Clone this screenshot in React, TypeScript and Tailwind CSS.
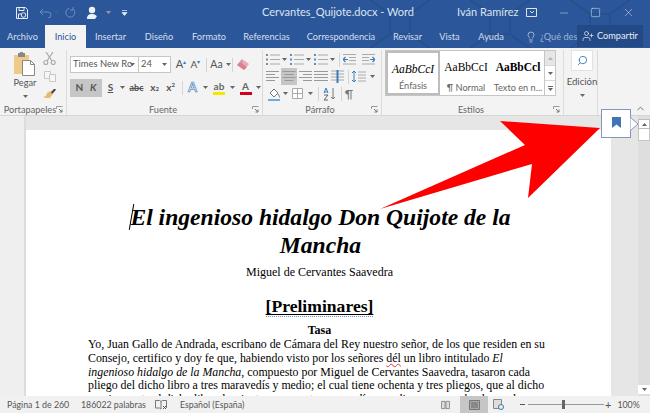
import React from "react";
import { Lightbulb, Search, UserPlus, Minus, X, Square, ChevronUp } from "lucide-react";

const ui = "font-['Lato','Roboto',sans-serif]";
const serif = "font-['Liberation_Serif','Times_New_Roman',serif]";

const tabs = [
  { label: "Archivo", w: "w-[45px]" },
  { label: "Inicio", w: "w-[41px]", active: true },
  { label: "Insertar", w: "w-[49px]" },
  { label: "Diseño", w: "w-[48px]" },
  { label: "Formato", w: "w-[52px]" },
  { label: "Referencias", w: "w-[63px]" },
  { label: "Correspondencia", w: "w-[86px]" },
  { label: "Revisar", w: "w-[47px]" },
  { label: "Vista", w: "w-[37px]" },
  { label: "Ayuda", w: "w-[46px]" },
];

function Caret({ className = "" }: { className?: string }) {
  return (
    <svg width="5" height="3" viewBox="0 0 5 3" className={className}>
      <path d="M0 0h5L2.500 3z" fill="#666" />
    </svg>
  );
}

function Launcher() {
  return (
    <svg width="7" height="7" viewBox="0 0 7 7" fill="none">
      <path d="M.5 3V.5H6.500" stroke="#999" />
      <path d="M3 3l3 3M6 3.500V6H3.500" stroke="#777" />
    </svg>
  );
}

function Cell({ w, children, className = "" }: { w: string; children?: React.ReactNode; className?: string }) {
  return <div className={`${w} h-full shrink-0 flex items-center justify-center ${className}`}>{children}</div>;
}

function Lines({ kind }: { kind: "left" | "center" | "right" | "justify" }) {
  const rows = [1, 4, 7, 10];
  const short = [13, 9, 13, 9];
  return (
    <svg width="14" height="11" viewBox="0 0 14 11">
      {rows.map((y, i) => {
        const len = kind === "justify" ? 14 : short[i];
        const x = kind === "left" || kind === "justify" ? 0 : kind === "center" ? (14 - len) / 2 : 14 - len;
        return <rect key={y} x={x} y={y - 1} width={len} height="1" fill="#999" />;
      })}
    </svg>
  );
}

function ListIcon({ colored }: { colored?: boolean }) {
  return (
    <svg width="14" height="12" viewBox="0 0 14 12">
      {[1, 5.5, 10].map((y) => (
        <g key={y}>
          <rect x="0" y={y - 1} width="2" height="2" fill={colored ? "#5b8bc0" : "#888"} />
          <rect x="4" y={y - 0.5} width="10" height="1" fill="#aaa" />
        </g>
      ))}
    </svg>
  );
}

function IndentIcon({ flip }: { flip?: boolean }) {
  return (
    <svg width="13" height="11" viewBox="0 0 13 11">
      <g transform={flip ? "translate(13 0) scale(-1 1)" : undefined}>
        <path d="M0 5.500h5M2.500 3L0 5.500 2.500 8" stroke="#3b7cb8" strokeWidth="1.2" fill="none" />
        <path d="M0 .5h13M6 3.500h7M6 6.500h7M0 10h13" stroke="#aaa" />
      </g>
    </svg>
  );
}

function PasteIcon() {
  return (
    <svg width="22" height="24" viewBox="0 0 22 24">
      <rect x="0" y="3" width="15" height="19" fill="#eec98a" />
      <rect x="4" y="1" width="7" height="4" fill="#888" />
      <rect x="6" y="0" width="3" height="2" fill="#888" />
      <path d="M8.500 8.500h8l4 4v11h-12z" fill="#fff" stroke="#888" />
      <path d="M16.500 8.500v4h4" fill="none" stroke="#888" />
    </svg>
  );
}

function ScissorsIcon() {
  return (
    <svg width="13" height="13" viewBox="0 0 13 13" fill="none" stroke="#aaa" strokeWidth="1.2">
      <path d="M3 0l6 9M10 0L4 9" />
      <circle cx="2.800" cy="10.500" r="2" />
      <circle cx="10.200" cy="10.500" r="2" />
    </svg>
  );
}

function CopyIcon() {
  return (
    <svg width="12" height="11" viewBox="0 0 12 11" fill="#f6f6f6" stroke="#c8c8c8">
      <path d="M.5.5h6v7h-6z" />
      <path d="M5.500 3.500h6v7h-6z" />
    </svg>
  );
}

function BrushIcon() {
  return (
    <svg width="13" height="11" viewBox="0 0 13 11">
      <path d="M7 3l3 3-1 1-2 3H3L0 9l3-1 1-3z" fill="#e8bb6c" />
      <path d="M8 4l3-3 2 0-1 2-3 3z" fill="#444" />
    </svg>
  );
}

function EraserIcon() {
  return (
    <svg width="14" height="14" viewBox="0 0 14 14">
      <path d="M1 7l5-6 7 5-5 6z" fill="#eba9b5" />
      <path d="M1 7l3-3 7 5-3 3z" fill="#dd7f92" />
      <path d="M5 2l1 3" stroke="#999" />
    </svg>
  );
}

function ColorA({ bar, children }: { bar: string; children: React.ReactNode }) {
  return (
    <div className="flex flex-col items-center leading-none">
      <span className="text-[10px] leading-[10px] font-bold text-[#666]">{children}</span>
      <span className={`w-[12px] h-[3px] mt-[1px] ${bar}`} />
    </div>
  );
}

function StyleItem({ sample, label, sampleClass = "", className = "" }: { sample: string; label: string; sampleClass?: string; className?: string }) {
  return (
    <div className={`flex flex-col items-center justify-between h-full shrink-0 pt-[9px] pb-[1px] bg-white ${className}`}>
      <span className={`${serif} text-[11.5px] leading-[14px] text-black whitespace-nowrap ${sampleClass}`}>{sample}</span>
      <span className="text-[9.2px] leading-[12px] text-[#666] whitespace-nowrap">{label}</span>
    </div>
  );
}

function GroupLabel({ label }: { label: string }) {
  return (
    <div className="h-[11px] mt-auto flex items-center relative text-[9.2px] text-[#666] leading-none">
      <span className="flex-1 text-center pr-[6px]">{label}</span>
      <span className="absolute right-[3px] top-[2px]">
        <Launcher />
      </span>
    </div>
  );
}

export default function App() {
  return (
    <div className={`w-[650px] h-[413px] overflow-hidden relative flex flex-col bg-[#f1f1f1] ${ui}`}>
      <div className="h-[48px] shrink-0 bg-[#2b579a] relative">
        {/* faint office pattern */}
        <svg width="300" height="48" viewBox="0 0 300 48" className="absolute left-[350px] top-0" fill="none" stroke="#26508f" strokeWidth="2">
          <path d="M20 0l20 14v20L20 48M80 0L60 14v20l20 14M60 14H40M60 34H40" />
          <path d="M120 0l20 14v20l-20 14M180 0l-20 14v20l20 14M160 14h-20M160 34h-20" />
          <path d="M220 0l20 14v20l-20 14M280 0l-20 14v20l20 14M260 14h-20M260 34h-20" />
        </svg>

        {/* title bar */}
        <div className="h-[25px] flex items-center text-[11px] text-[#dbe4f1] relative">
          <div className="flex items-center pl-[16px] w-[262px]">
            <svg width="12" height="12" viewBox="0 0 12 12" fill="none" stroke="#e6ecf5">
              <path d="M.5.5h9l2 2v9H.5z" />
              <path d="M3 .5v3h5v-3" />
              <circle cx="7.500" cy="8" r="2.300" fill="#2b579a" />
              <path d="M2.500 11V7h3" />
            </svg>
            <svg width="13" height="10" viewBox="0 0 13 10" fill="none" stroke="#6f8cba" className="ml-[11px]">
              <path d="M1 4h8a3 3 0 010 6M1 4l3-3M1 4l3 3" />
            </svg>
            <Caret className="ml-[2px] opacity-40" />
            <svg width="11" height="11" viewBox="0 0 11 11" fill="none" stroke="#6f8cba" className="ml-[6px]">
              <path d="M8 2a4.500 4.500 0 11-4-.7M8 0v3H5" />
            </svg>
            <svg width="11" height="14" viewBox="0 0 11 14" className="ml-[11px]">
              <circle cx="5" cy="4" r="3.200" fill="#eef2f8" />
              <path d="M0 13c0-4 2-5 5-5s3 1 5 2l-2 3z" fill="#eef2f8" />
            </svg>
            <Caret className="ml-[8px] invert" />
            <svg width="7" height="6" viewBox="0 0 7 6" className="ml-[10px]">
              <path d="M1 .5h5M1 2.500h5L3.500 5.500z" stroke="#e6ecf5" fill="#e6ecf5" strokeWidth=".7" />
            </svg>
          </div>
          <span className="w-[195px] whitespace-nowrap">Cervantes_Quijote.docx - Word</span>
          <span className="w-[68px] whitespace-nowrap">Iván Ramírez</span>
          <svg width="11" height="9" viewBox="0 0 11 9" fill="none" stroke="#dbe4f1" className="ml-[1px]">
            <path d="M.5.5h10v8H.5z" />
            <path d="M4 3l2 2 2-2" />
          </svg>
          <Minus size={12} strokeWidth={1} className="ml-[21px] text-[#dbe4f1]" />
          <Square size={11} strokeWidth={1.2} className="ml-[20px] text-[#dbe4f1]" />
          <X size={13} strokeWidth={1} className="ml-[21px] text-[#dbe4f1]" />
        </div>

        {/* tabs */}
        <div className="h-[23px] flex items-stretch text-[9.2px] text-[#d5dfee] leading-none relative">
          {tabs.map((t) => (
            <div
              key={t.label}
              className={`${t.w} shrink-0 flex items-center justify-center whitespace-nowrap ${t.active ? "bg-[#f3f3f3] text-[#2b579a]" : ""}`}
            >
              {t.label}
            </div>
          ))}
          <div className="flex items-center ml-[11px] w-[50px] text-[#9fb4d3]">
            <Lightbulb size={12} strokeWidth={1.3} className="text-[#dbe4f1] mr-[3px] shrink-0" />
            <span className="whitespace-nowrap">¿Qué des</span>
          </div>
          <div className="w-[66px] ml-[2px] mb-[1px] bg-[#234a86] flex items-center justify-center text-[#e6ecf5] whitespace-nowrap">
            <UserPlus size={12} strokeWidth={1.4} className="mr-[3px]" />
            Compartir
          </div>
        </div>
      </div>

      {/* ribbon */}
      <div className="h-[68px] shrink-0 bg-[#f3f3f3] border-b border-[#d6d6d6] flex text-[#555]">
        {/* Portapapeles */}
        <div className="w-[67px] shrink-0 flex flex-col border-r border-[#dcdcdc] mt-[2px]">
          <div className="flex pt-[2px]">
            <div className="w-[41px] flex flex-col items-center pl-[9px]">
              <PasteIcon />
              <span className="text-[9.2px] leading-[12px] mt-[1px]">Pegar</span>
              <Caret className="mt-[6px]" />
            </div>
            <div className="flex flex-col items-center gap-[6px] pl-[2px]">
              <ScissorsIcon />
              <CopyIcon />
              <BrushIcon />
            </div>
          </div>
          <GroupLabel label="Portapapeles" />
        </div>

        {/* Fuente */}
        <div className="w-[196px] shrink-0 flex flex-col border-r border-[#dcdcdc] mt-[2px] pl-[3px]">
          <div className="h-[17px] mt-[6px] flex items-center">
            <div className="w-[69px] h-full bg-white border border-[#c6c6c6] flex items-center pl-[2px] text-[9.4px] whitespace-nowrap">
              <span className="w-[57px]">Times New Ro</span>
              <Caret />
            </div>
            <div className="w-[32px] h-full bg-white border border-l-0 border-[#c6c6c6] flex items-center pl-[2px] text-[9.4px]">
              <span className="w-[21px]">24</span>
              <Caret />
            </div>
            <Cell w="w-[17px]" className="text-[11px] pl-[3px]">A<sup className="text-[6px] text-[#3b7cb8]">▴</sup></Cell>
            <Cell w="w-[15px]" className="text-[10px]">A<sup className="text-[6px] text-[#3b7cb8]">▾</sup></Cell>
            <div className="w-px h-[14px] bg-[#d4d4d4] ml-[3px]" />
            <Cell w="w-[24px]" className="text-[10.5px] pl-[3px]">Aa<Caret className="ml-[3px]" /></Cell>
            <div className="w-px h-[14px] bg-[#d4d4d4] ml-[1px]" />
            <Cell w="w-[20px]"><EraserIcon /></Cell>
          </div>
          <div className="h-[17px] mt-[6px] flex items-center">
            <div className="w-[32px] h-[18px] bg-[#c6c6c6] flex items-center justify-around text-[10px] font-bold px-[2px]">
              <span>N</span>
              <span className="italic">K</span>
            </div>
            <Cell w="w-[17px]" className="text-[10px] font-bold underline">S</Cell>
            <Cell w="w-[7px]"><Caret /></Cell>
            <Cell w="w-[21px]" className="text-[9px] font-bold line-through">abc</Cell>
            <Cell w="w-[15px]" className="text-[10px] font-bold">x<sub className="text-[6px]">2</sub></Cell>
            <Cell w="w-[17px]" className="text-[10px] font-bold">x<sup className="text-[6px]">2</sup></Cell>
            <div className="w-px h-[14px] bg-[#d4d4d4] ml-[3px]" />
            <Cell w="w-[19px]" className="text-[13px] text-[#dbe8f7] font-bold [-webkit-text-stroke:0.6px_#3b7cb8]">A</Cell>
            <Cell w="w-[7px]"><Caret /></Cell>
            <Cell w="w-[20px]"><ColorA bar="bg-[#f5e500]">ab</ColorA></Cell>
            <Cell w="w-[7px]"><Caret /></Cell>
            <Cell w="w-[19px]"><ColorA bar="bg-[#d0021b]">A</ColorA></Cell>
            <Cell w="w-[7px]"><Caret /></Cell>
          </div>
          <GroupLabel label="Fuente" />
        </div>

        {/* Párrafo */}
        <div className="w-[119px] shrink-0 flex flex-col border-r border-[#dcdcdc] mt-[2px] pl-[2px]">
          <div className="h-[17px] mt-[1px] flex items-center">
            <Cell w="w-[15px]"><ListIcon /></Cell>
            <Cell w="w-[9px]"><Caret /></Cell>
            <Cell w="w-[15px]"><ListIcon colored /></Cell>
            <Cell w="w-[9px]"><Caret /></Cell>
            <Cell w="w-[15px]"><ListIcon colored /></Cell>
            <Cell w="w-[8px]"><Caret /></Cell>
            <div className="w-px h-[14px] bg-[#d4d4d4] ml-[3px]" />
            <Cell w="w-[19px]"><IndentIcon /></Cell>
            <Cell w="w-[18px]"><IndentIcon flip /></Cell>
          </div>
          <div className="h-[17px] flex items-center">
            <Cell w="w-[16px]"><Lines kind="left" /></Cell>
            <Cell w="w-[16px]" className="bg-[#c6c6c6]"><Lines kind="center" /></Cell>
            <Cell w="w-[16px]"><Lines kind="right" /></Cell>
            <Cell w="w-[16px]"><Lines kind="justify" /></Cell>
            <Cell w="w-[16px]">
              <svg width="13" height="13" viewBox="0 0 13 13">
                <path d="M0 1h13M0 4h13M0 7h13M0 10h13" stroke="#aaa" />
                <path d="M6.500 0v13" stroke="#3b7cb8" strokeWidth="2" />
              </svg>
            </Cell>
            <div className="w-px h-[14px] bg-[#d4d4d4] ml-[3px]" />
            <Cell w="w-[20px]">
              <svg width="14" height="13" viewBox="0 0 14 13">
                <path d="M2 1v11M0 3l2-2 2 2M0 10l2 2 2-2" stroke="#3b7cb8" fill="none" />
                <path d="M6 2h8M6 5h8M6 8h8M6 11h8" stroke="#aaa" />
              </svg>
            </Cell>
            <Cell w="w-[6px]"><Caret /></Cell>
          </div>
          <div className="h-[17px] flex items-center">
            <Cell w="w-[17px]">
              <svg width="14" height="14" viewBox="0 0 14 14" fill="none">
                <path d="M3 6l4-4 4 4-4 4z" stroke="#777" fill="#fff" />
                <path d="M11 7c1 2 2 2 1.500 3.500" stroke="#777" />
                <path d="M1 13h12" stroke="#4a90c8" strokeWidth="1.500" />
              </svg>
            </Cell>
            <Cell w="w-[7px]"><Caret /></Cell>
            <Cell w="w-[17px]">
              <svg width="11" height="11" viewBox="0 0 11 11" fill="#fff" stroke="#aaa">
                <path d="M.5.5h10v10H.5zM5.500.5v10M.5 5.500h10" />
              </svg>
            </Cell>
            <Cell w="w-[9px]"><Caret /></Cell>
            <div className="w-px h-[14px] bg-[#d4d4d4] ml-[3px]" />
            <Cell w="w-[20px]">
              <svg width="13" height="14" viewBox="0 0 13 14" fill="none">
                <path d="M1 6l2-5 2 5M1.500 5h3" stroke="#3b7cb8" />
                <path d="M1 8h4L1 13h4" stroke="#666" />
                <path d="M10 1v11M8 10l2 2 2-2" stroke="#777" />
              </svg>
            </Cell>
            <div className="w-px h-[14px] bg-[#d4d4d4] ml-[2px]" />
            <Cell w="w-[14px]" className="text-[12px] text-[#777]">¶</Cell>
          </div>
          <GroupLabel label="Párrafo" />
        </div>

        {/* Estilos */}
        <div className="w-[182px] shrink-0 flex flex-col border-r border-[#dcdcdc] mt-[2px] pl-[3px]">
          <div className="flex h-[46px] w-[171px] border border-[#c6c6c6] bg-white">
            <StyleItem sample="AaBbCcI" label="Énfasis" sampleClass="italic" className="w-[54px] border-[2px] border-[#bdbdbd] pt-[7px] pb-0" />
            <StyleItem sample="AaBbCcI" label="¶ Normal" className="w-[52px]" />
            <StyleItem sample="AaBbCcl" label="Texto en n..." sampleClass="font-bold" className="w-[52px]" />
            <div className="flex-1 flex flex-col border-l border-[#c6c6c6]">
              <div className="h-[14px] bg-[#e6e6e6] flex items-center justify-center"><Caret className="rotate-180 opacity-40" /></div>
              <div className="flex-1 flex items-center justify-center border-y border-[#d6d6d6]"><Caret /></div>
              <div className="h-[14px] flex flex-col items-center justify-center gap-[1px]">
                <span className="w-[5px] h-px bg-[#666]" />
                <Caret />
              </div>
            </div>
          </div>
          <GroupLabel label="Estilos" />
        </div>

        {/* Edición */}
        <div className="w-[34px] shrink-0 flex flex-col items-center border-r border-[#dcdcdc] mt-[2px] pl-[3px]">
          <div className="w-[22px] h-[21px] bg-white border border-[#e2e2e2] flex items-center justify-center">
            <Search size={11} strokeWidth={2} className="text-[#3b7cb8] -scale-x-100" />
          </div>
          <span className="text-[9.6px] leading-[12px] mt-[5px]">Edición</span>
          <Caret className="mt-[6px]" />
        </div>
        <div className="flex-1 flex items-end justify-end pr-[4px] pb-[1px]">
          <ChevronUp size={11} strokeWidth={2} className="text-[#666]" />
        </div>
      </div>

      {/* document area */}
      <div className="flex-1 min-h-0 flex bg-[#e6e6e6] overflow-hidden">
        <div className="w-[26px] shrink-0 bg-[#efefef] border-r-2 border-[#dcdcdc]" />
        <div className={`w-[585px] shrink-0 mt-[14px] bg-white pl-[62px] pt-[74px] text-black ${serif}`}>
          <div className="w-[463px]">
            <h1 className="text-center font-bold italic text-[23.6px] leading-[27.5px] pl-[2px]">
              El ingenioso hidalgo Don Quijote de la
              <br />
              Mancha
            </h1>
            <p className="text-center text-[12px] leading-[14px] mt-[6px]">Miguel de Cervantes Saavedra</p>
            <h2 className="text-center font-bold text-[17.6px] leading-[21px] mt-[17px]">
              <span className="underline decoration-1 underline-offset-2 border-b border-dotted border-[#6a93cf]">[Preliminares]</span>
            </h2>
            <p className="text-center font-bold text-[12px] leading-[14px] mt-[6px]">Tasa</p>
            <p className="text-[11.85px] leading-[13.75px] mt-[1px] whitespace-nowrap">
              Yo, Juan Gallo de Andrada, escribano de Cámara del Rey nuestro señor, de los que residen en su
              <br />
              Consejo, certifico y doy fe que, habiendo visto por los señores{" "}
              <span className="underline decoration-wavy decoration-[#d33] decoration-1">dél</span> un libro intitulado <i>El</i>
              <br />
              <i>ingenioso hidalgo de la Mancha</i>, compuesto por Miguel de Cervantes Saavedra, tasaron cada
              <br />
              pliego del dicho libro a tres maravedís y medio; el cual tiene ochenta y tres pliegos, que al dicho
              <br />
              precio monta el dicho libro doscientos y noventa maravedís y medio, en que se ha de vender
            </p>
          </div>
        </div>
        <div className="w-[27px] shrink-0 bg-[#e6e6e6]" />
        <div className="flex-1 bg-[#dedede] flex flex-col pt-[3px]">
          <div className="h-[10px] bg-white border border-[#bbb] flex items-center justify-center"><Caret className="rotate-180" /></div>
          <div className="h-[12px] bg-white border border-t-0 border-[#c6c6c6]" />
          <div className="flex-1" />
          <div className="h-[9px] bg-white flex items-center justify-center mb-[2px]"><Caret /></div>
        </div>
      </div>

      {/* status bar */}
      <div className="h-[17px] shrink-0 bg-[#f1f1f1] flex items-center text-[8.8px] text-[#555] whitespace-nowrap relative">
        <span className="ml-[7px] w-[74px]">Página 1 de 260</span>
        <span className="w-[74px]">186022 palabras</span>
        <svg width="12" height="11" viewBox="0 0 12 11" fill="none" stroke="#777">
          <path d="M.5 1.500h4l1.500 1v7.500L4.500 9H.5zM6 2.500l1.500-1h4v7.500" />
          <path d="M8 7l3 3M11 7l-3 3" stroke="#555" />
        </svg>
        <span className="ml-[13px] w-[261px]">Español (España)</span>
        <Cell w="w-[9px]">
          <svg width="10" height="10" viewBox="0 0 10 10" fill="#ddd" stroke="#888">
            <path d="M.5 1h4v8h-4zM5.500 1h4v8h-4z" />
          </svg>
        </Cell>
        <Cell w="w-[28px]" className="ml-[10px] bg-[#c6c6c6]">
          <svg width="11" height="10" viewBox="0 0 11 10" fill="#aaa" stroke="#777">
            <path d="M.5.500h10v9H.5z" />
            <path d="M2 3h7M2 5h7M2 7h7" stroke="#666" />
          </svg>
        </Cell>
        <Cell w="w-[14px]" className="ml-[3px]">
          <svg width="11" height="11" viewBox="0 0 11 11" fill="none" stroke="#888">
            <path d="M.5.500h8v9h-8z" fill="#ddd" />
            <circle cx="8" cy="8" r="2.500" fill="#eee" stroke="#3a7ca5" />
          </svg>
        </Cell>
        <span className="ml-[15px] w-[5px] h-px bg-[#555]" />
        <div className="ml-[3px] w-[76px] h-px bg-[#999] relative">
          <span className="absolute left-[34px] -top-[4px] w-[3px] h-[9px] bg-[#666]" />
        </div>
        <span className="text-[11px] leading-none text-[#555] ml-[1px]">+</span>
        <span className="ml-[6px]">100%</span>
      </div>

      {/* cursor on the title */}
      <div className="absolute left-[131px] top-[204px] w-px h-[26px] bg-black rotate-[10deg]" />

      {/* tooltip bookmark */}
      <div className="absolute left-[601px] top-[109px] w-[30px] h-[29px] bg-white border border-[#7f97bd]">
        <svg width="9" height="11" viewBox="0 0 9 11" className="mx-auto mt-[7px]">
          <path d="M0 0h9v11L4.500 7.500 0 11z" fill="#3f74b5" />
        </svg>
      </div>
      <svg width="9" height="14" viewBox="0 0 9 14" className="absolute left-[630px] top-[117px]">
        <path d="M0 0l8 7-8 7z" fill="#fff" stroke="#7f97bd" />
        <path d="M-1 1v12" stroke="#fff" strokeWidth="2" />
      </svg>

      {/* red arrow */}
      <svg width="650" height="413" viewBox="0 0 650 413" className="absolute inset-0 pointer-events-none">
        <path d="M600 128L500 121L525 145L380 209L532 164L528 198Z" fill="#fe0000" />
      </svg>
    </div>
  );
}
